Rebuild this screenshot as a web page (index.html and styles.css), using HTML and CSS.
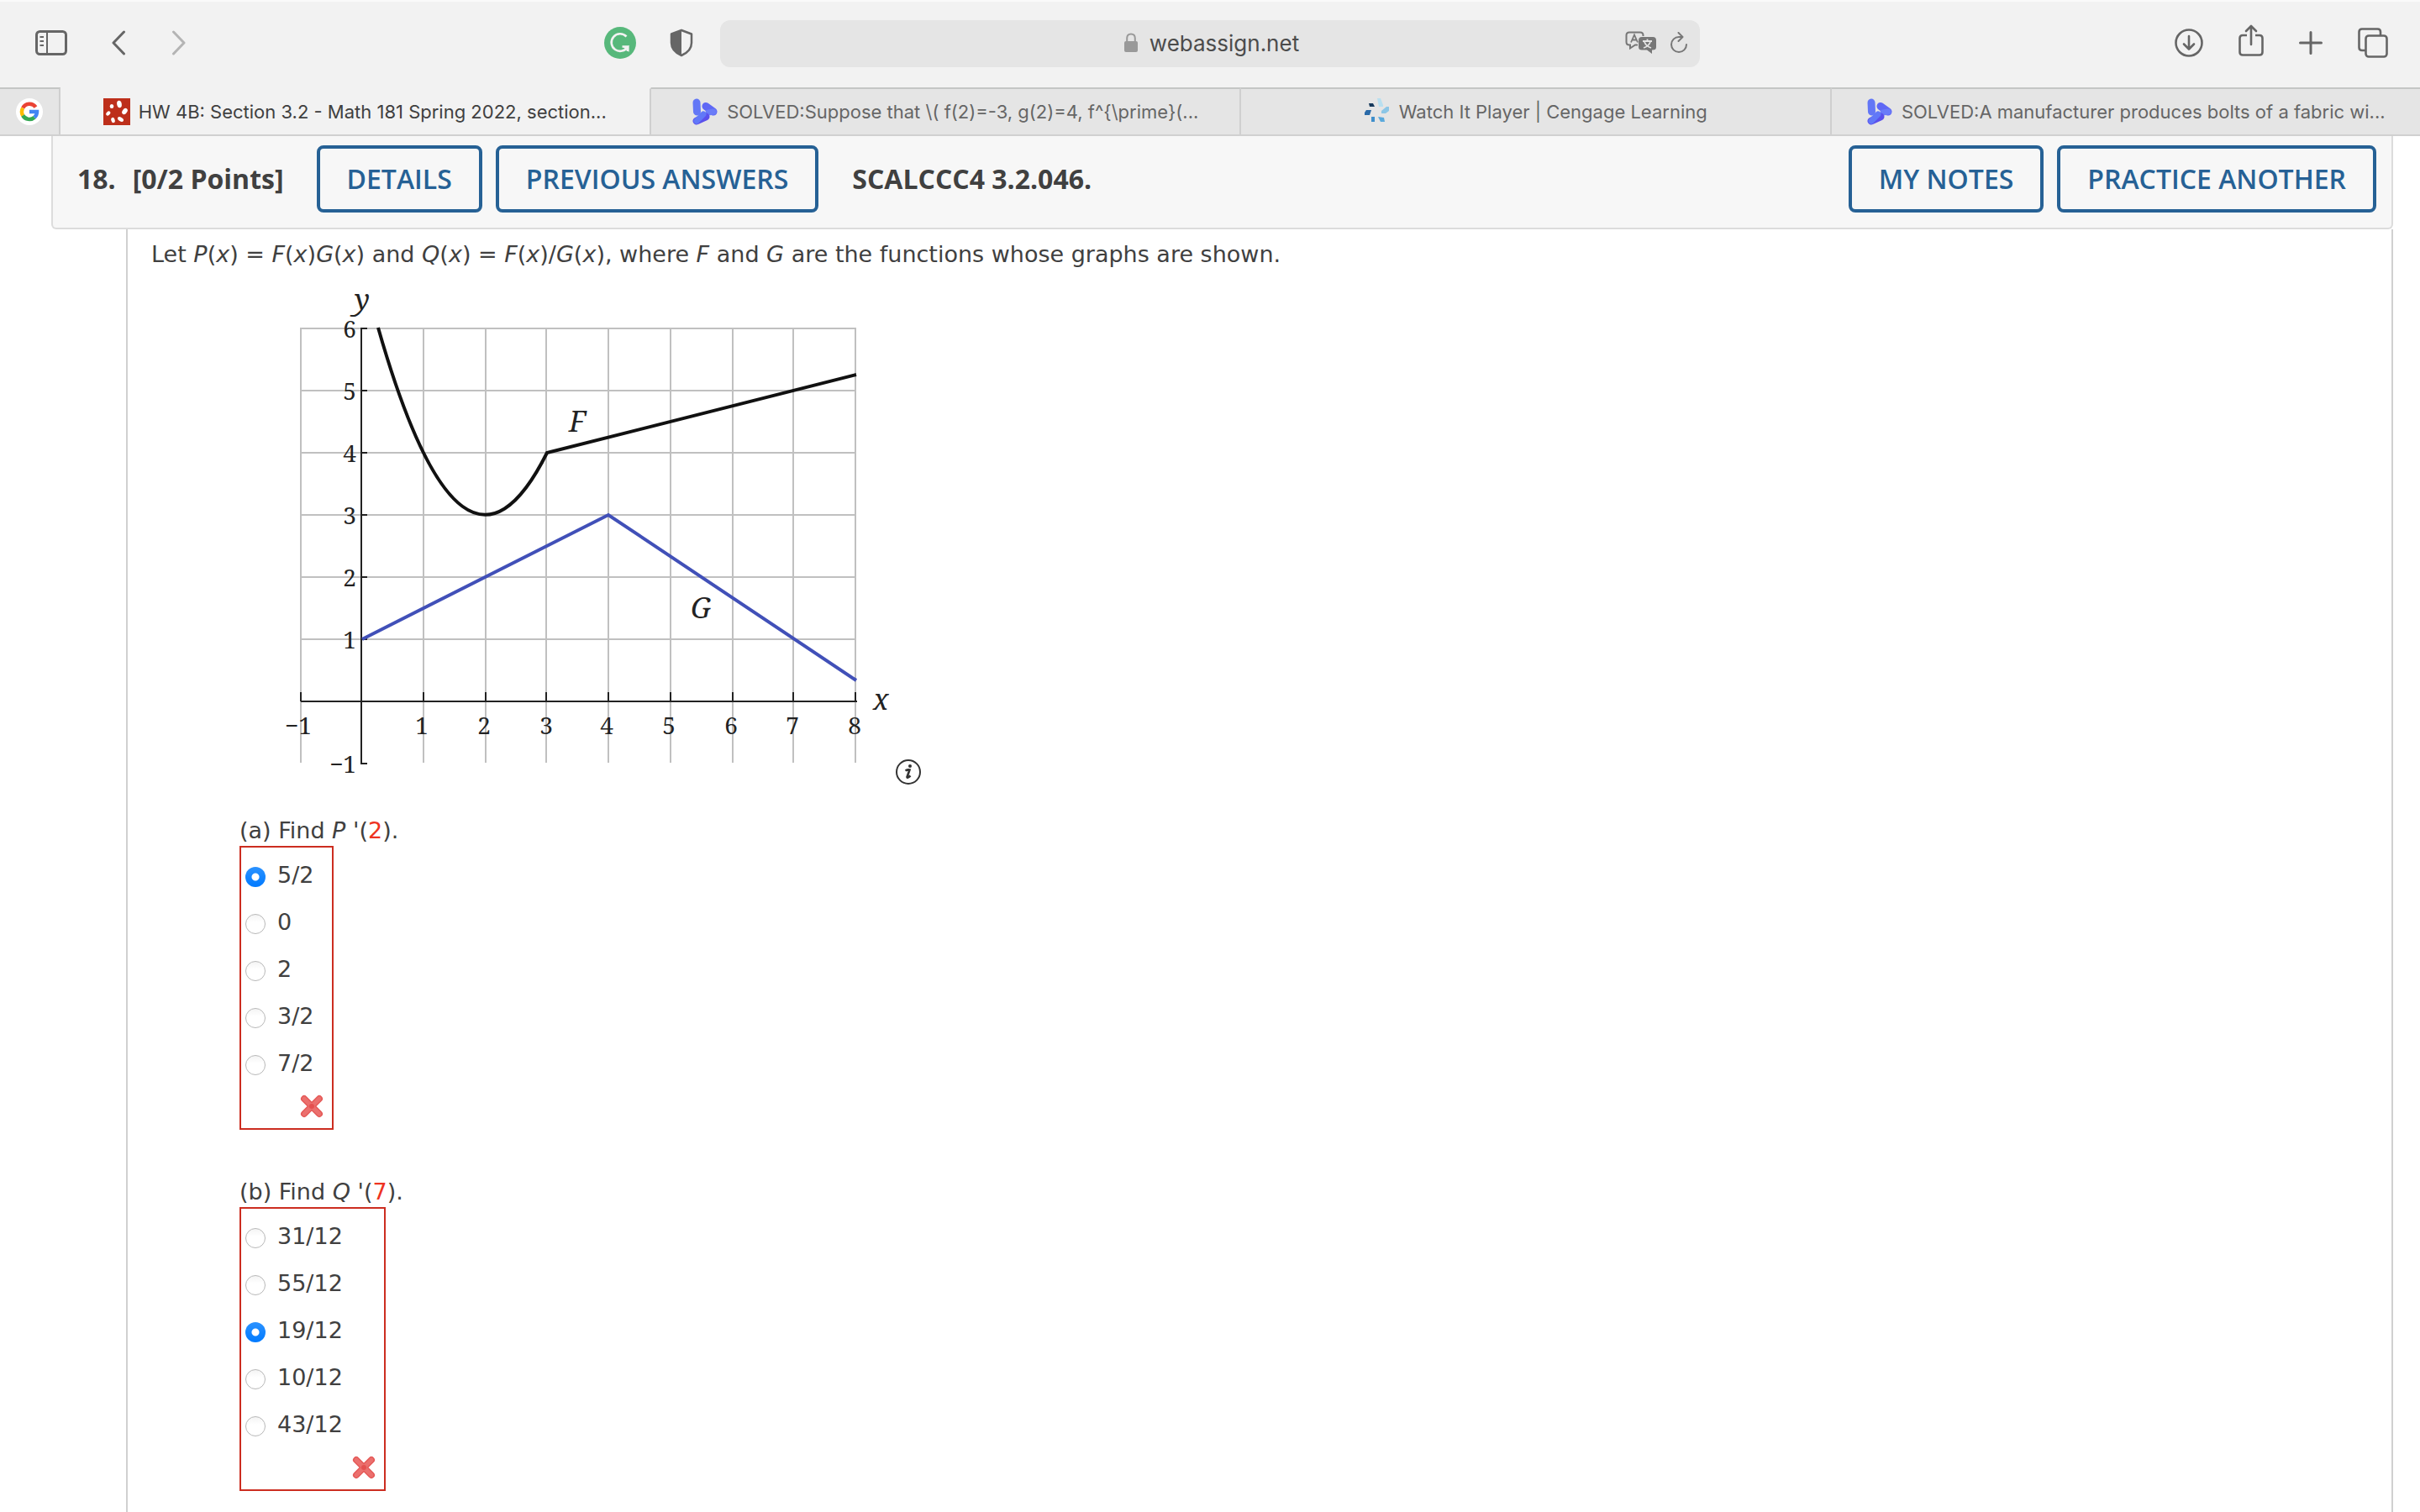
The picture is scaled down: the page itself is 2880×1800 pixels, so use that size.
FILE: index.html
```
<!DOCTYPE html>
<html lang="en">
<head>
<meta charset="utf-8">
<title>HW 4B: Section 3.2 - Math 181 Spring 2022</title>
<link rel="stylesheet" href="styles.css">
</head>
<body>
<svg class="defs" aria-hidden="true">
  <defs>
    <symbol id="cross" viewBox="0 0 28 28"><path d="M5 5 23 23M23 5 5 23" fill="none" stroke="#e55a58" stroke-width="8" stroke-linecap="round"/><path d="M5 5 23 23M23 5 5 23" fill="none" stroke="#eb706e" stroke-width="5" stroke-linecap="round"/><circle cx="14" cy="14" r="3" fill="#e4504f"/></symbol>
    <symbol id="numerade" viewBox="0 0 32 32"><g fill="none" stroke-linecap="round"><path d="M6 5 6.500 16" stroke="#6377f6" stroke-width="9"/><path d="M17 9.500 26 16" stroke="#5f68f5" stroke-width="9"/><path d="M26 16 20 17" stroke="#6a7cf8" stroke-width="7"/><path d="M17 22 6 27" stroke="#5a50ec" stroke-width="9"/><path d="M14 19 6 27" stroke="#6178f8" stroke-width="7"/></g></symbol>
  </defs>
</svg>
<header class="browser">
  <div class="toolbar">
    <div class="tools tools-left">
      <button class="icon-btn" aria-label="Sidebar"><svg width="40" height="32" viewBox="0 0 40 32"><rect x="2.500" y="2.500" width="35" height="27" rx="4" fill="none" stroke="#666" stroke-width="3"/><path d="M15 2V30" stroke="#666" stroke-width="2"/><path d="M6.500 9H11M6.500 14H11M6.500 19H11" stroke="#666" stroke-width="2"/></svg></button>
      <button class="icon-btn back" aria-label="Back"><svg width="18" height="30" viewBox="0 0 18 30"><path d="M15.500 2 3 15 15.500 28" fill="none" stroke="#666" stroke-width="3" stroke-linecap="round" stroke-linejoin="round"/></svg></button>
      <button class="icon-btn forward" aria-label="Forward"><svg width="18" height="30" viewBox="0 0 18 30"><path d="M2.500 2 15 15 2.500 28" fill="none" stroke="#b4b4b4" stroke-width="3" stroke-linecap="round" stroke-linejoin="round"/></svg></button>
      <div class="extensions">
        <button class="icon-btn" aria-label="Grammarly"><svg width="38" height="38" viewBox="0 0 38 38"><circle cx="19" cy="19" r="19" fill="#57b87b"/><path d="M26.500 11.500A10.300 10.300 0 1 0 28 23.500H21.500M28 23.500V29" fill="none" stroke="#f2f2f2" stroke-width="2.600"/><path d="M22 23.500H29.500V30Z" fill="#f2f2f2"/></svg></button>
        <button class="icon-btn" aria-label="Privacy report"><svg width="28" height="34" viewBox="0 0 28 34"><path d="M14 2 26 6.500V17C26 24 21 29 14 32 7 29 2 24 2 17V6.500Z" fill="none" stroke="#666" stroke-width="2.500" stroke-linejoin="round"/><path d="M14 2V32C7 29 2 24 2 17V6.500Z" fill="#666"/></svg></button>
      </div>
    </div>
    <div class="address">
      <svg width="16" height="24" viewBox="0 0 16 24"><path d="M3.200 11V6.500C3.200 3.500 5 1.500 8 1.500S12.800 3.500 12.800 6.500V11" fill="none" stroke="#999" stroke-width="2"/><rect y="10" width="16" height="13" rx="2" fill="#999"/></svg>
      <span>webassign.net</span>
      <div class="address-actions">
        <button class="icon-btn" aria-label="Translate"><svg width="37" height="28" viewBox="0 0 37 28"><path d="M15 16.500H12L6 20.500V16.500H5Q1.500 16.500 1.500 13V5Q1.500 1.500 5 1.500H18Q21.500 1.500 21.500 5V6" fill="none" stroke="#777" stroke-width="2"/><path d="M7 13.500 11 4.500 15 13.500M8.500 10.500H13.500" fill="none" stroke="#777" stroke-width="1.800"/><path d="M20 7H33Q37 7 37 11V19Q37 22.500 33 22.500H32V27L26 22.500H20Q16 22.500 16 19V11Q16 7 20 7Z" fill="#777"/><path d="M21 12H32M26.500 9.500V12M23 13Q25 18 31 20M30 13Q28 18 22 20" fill="none" stroke="#e5e5e5" stroke-width="1.800"/></svg></button>
        <button class="icon-btn" aria-label="Reload"><svg width="22" height="26" viewBox="0 0 22 26"><path d="M14.500 6H11A9 9 0 1 0 20 15M10.500 1 15.500 6 10.500 11" fill="none" stroke="#777" stroke-width="2" stroke-linecap="round" stroke-linejoin="round"/></svg></button>
      </div>
    </div>
    <div class="tools tools-right">
      <button class="icon-btn" aria-label="Downloads"><svg width="34" height="34" viewBox="0 0 34 34"><circle cx="17" cy="17" r="15.500" fill="none" stroke="#666" stroke-width="2.600"/><path d="M17 9V24M11 18.500 17 24.500 23 18.500" fill="none" stroke="#666" stroke-width="2.600" stroke-linecap="round" stroke-linejoin="round"/></svg></button>
      <button class="icon-btn" aria-label="Share"><svg class="share" width="30" height="38" viewBox="0 0 30 38"><path d="M10 13H5Q1.500 13 1.500 16.500V33Q1.500 36.500 5 36.500H25Q28.500 36.500 28.500 33V16.500Q28.500 13 25 13H20" fill="none" stroke="#666" stroke-width="2.600"/><path d="M15 24V3M9 8 15 2 21 8" fill="none" stroke="#666" stroke-width="2.600" stroke-linecap="round" stroke-linejoin="round"/></svg></button>
      <button class="icon-btn" aria-label="New tab"><svg width="28" height="28" viewBox="0 0 28 28"><path d="M14 1.500V26.500M1.500 14H26.500" stroke="#666" stroke-width="3" stroke-linecap="round"/></svg></button>
      <button class="icon-btn" aria-label="Show tabs"><svg width="36" height="36" viewBox="0 0 36 36"><path d="M9 27H5Q1.500 27 1.500 23.500V5Q1.500 1.500 5 1.500H23.500Q27 1.500 27 5V9" fill="none" stroke="#666" stroke-width="2.600"/><rect x="9.500" y="9.500" width="25" height="25" rx="3.500" fill="none" stroke="#666" stroke-width="2.600"/></svg></button>
    </div>
  </div>
  <nav class="tabs">
    <a class="tab pinned" href="#" aria-label="Google"><svg width="32" height="32" viewBox="0 0 32 32"><circle cx="16" cy="16" r="16" fill="#fff"/><g fill="none" stroke-width="4.500"><path d="M23.500 10.500A9 9 0 0 0 8.200 11.500" stroke="#ea4335"/><path d="M8.200 11.500A9 9 0 0 0 8.200 20.500" stroke="#fbbc05"/><path d="M8.200 20.500A9 9 0 0 0 22 22.700" stroke="#34a853"/><path d="M22 22.700A9 9 0 0 0 25 16H16" stroke="#4285f4"/></g></svg></a>
    <a class="tab active" href="#"><svg width="32" height="32" viewBox="0 0 32 32"><rect width="32" height="32" fill="#bd2f1b"/><g fill="#fff"><ellipse cx="19" cy="7" rx="2.800" ry="4.200" transform="rotate(-10 19 7)"/><ellipse cx="10" cy="9.500" rx="2.300" ry="2.500"/><ellipse cx="25.500" cy="15.500" rx="2.800" ry="4" transform="rotate(35 25.500 15.500)"/><ellipse cx="5.800" cy="18" rx="2" ry="3" transform="rotate(45 5.800 18)"/><ellipse cx="11.500" cy="26" rx="2.200" ry="3.200" transform="rotate(-15 11.500 26)"/><ellipse cx="20.500" cy="25" rx="2.300" ry="3.800" transform="rotate(-60 20.500 25)"/></g></svg><span>HW 4B: Section 3.2 - Math 181 Spring 2022, section...</span></a>
    <a class="tab" href="#"><svg width="32" height="32"><use href="#numerade"/></svg><span>SOLVED:Suppose that \( f(2)=-3, g(2)=4, f^{\prime}(...</span></a>
    <a class="tab" href="#"><svg width="32" height="32" viewBox="0 0 32 32"><path d="M16 0H20L23 8V10H18Z" fill="#b9dff0"/><path d="M6 6H11L13 10H7Z" fill="#16395c"/><path d="M27 10H30V15L26 18H21V15Z" fill="#8cc6e6"/><path d="M3 14H9L7 20H1V17Z" fill="#2a6aa8"/><path d="M9 22H13V28H9Z" fill="#3f8fcb"/><path d="M17 22 24 23 25 28H20Z" fill="#5aa9dc"/></svg><span>Watch It Player | Cengage Learning</span></a>
    <a class="tab" href="#"><svg width="32" height="32"><use href="#numerade"/></svg><span>SOLVED:A manufacturer produces bolts of a fabric wi...</span></a>
  </nav>
</header>
<main class="question">
  <div class="question-head">
    <span class="number">18.</span>
    <span class="points">[0/2 Points]</span>
    <button class="btn">DETAILS</button>
    <button class="btn">PREVIOUS ANSWERS</button>
    <span class="source">SCALCCC4 3.2.046.</span>
    <button class="btn notes">MY NOTES</button>
    <button class="btn">PRACTICE ANOTHER</button>
  </div>
  <div class="question-body">
    <p class="prompt">Let <i>P</i>(<i>x</i>) = <i>F</i>(<i>x</i>)<i>G</i>(<i>x</i>) and <i>Q</i>(<i>x</i>) = <i>F</i>(<i>x</i>)/<i>G</i>(<i>x</i>), where <i>F</i> and <i>G</i> are the functions whose graphs are shown.</p>
    <div class="figure">
      <svg class="graph" width="732" height="606" viewBox="0 -12 732 606" role="img" aria-label="Graphs of F and G">
        <path class="grid" d="M25 49V567M171 49V567M245 49V567M317 49V567M391 49V567M465 49V567M539 49V567M611 49V567M685 49V567M25 50H686M25 124H686M25 198H686M25 272H686M25 346H686M25 420H686"/>
        <path class="axis" d="M25 494H687M97 49V569M25 494V483M171 494V483M245 494V483M317 494V483M391 494V483M465 494V483M539 494V483M611 494V483M685 494V483M97 50H104M97 124H104M97 198H104M97 272H104M97 346H104M97 420H104M97 568H104"/>
        <path class="curve-f" d="M117 49Q217 400 318 198L686 105"/>
        <path class="curve-g" d="M98 420 391 272 686 469"/>
        <g class="ticks" text-anchor="middle">
          <text x="22" y="533">−1</text><text x="169" y="533">1</text><text x="243" y="533">2</text><text x="317" y="533">3</text><text x="389" y="533">4</text><text x="463" y="533">5</text><text x="537" y="533">6</text><text x="610" y="533">7</text><text x="684" y="533">8</text>
        </g>
        <g class="ticks" text-anchor="end">
          <text x="91" y="61">6</text><text x="91" y="135">5</text><text x="91" y="209">4</text><text x="91" y="283">3</text><text x="91" y="357">2</text><text x="91" y="431">1</text><text x="91" y="579">−1</text>
        </g>
        <g class="names"><text x="89" y="28">y</text><text x="344" y="173">F</text><text x="489" y="395">G</text><text x="706" y="504">x</text></g>
      </svg>
      <button class="icon-btn" aria-label="Image description"><svg width="32" height="32" viewBox="0 0 32 32"><circle cx="16" cy="16" r="14" fill="#fff" stroke="#333" stroke-width="2"/><circle cx="18" cy="9" r="2" fill="#333"/><path d="M12.500 14.500Q15 13 17.500 13.500L14.500 22Q14.500 24 18.500 20.500" fill="none" stroke="#333" stroke-width="2.600"/></svg></button>
    </div>
    <section class="part">
      <p>(a) Find <i>P</i> <i>'</i>(<span class="value">2</span>).</p>
      <fieldset class="answers">
        <label><input type="radio" name="a" checked>5/2</label>
        <label><input type="radio" name="a">0</label>
        <label><input type="radio" name="a">2</label>
        <label><input type="radio" name="a">3/2</label>
        <label><input type="radio" name="a">7/2</label>
        <svg class="mark" width="28" height="28" role="img" aria-label="Incorrect"><use href="#cross"/></svg>
      </fieldset>
    </section>
    <section class="part">
      <p>(b) Find <i>Q</i> <i>'</i>(<span class="value">7</span>).</p>
      <fieldset class="answers wide">
        <label><input type="radio" name="b">31/12</label>
        <label><input type="radio" name="b">55/12</label>
        <label><input type="radio" name="b" checked>19/12</label>
        <label><input type="radio" name="b">10/12</label>
        <label><input type="radio" name="b">43/12</label>
        <svg class="mark" width="28" height="28" role="img" aria-label="Incorrect"><use href="#cross"/></svg>
      </fieldset>
    </section>
  </div>
</main>
</body>
</html>
```
FILE: styles.css
```
* { box-sizing: border-box; }
html, body { height: 100%; }
body {
  margin: 0;
  display: flex;
  flex-direction: column;
  background: #fff;
  color: #404040;
  font-family: "DejaVu Sans", Verdana, sans-serif;
  font-size: 27px;
  overflow: hidden;
}
.defs { position: absolute; width: 0; height: 0; }
p { margin: 0; }
svg { display: block; flex: none; }
.icon-btn { display: block; padding: 0; border: 0; background: none; }

.browser { flex: none; background: #f2f2f2; font-family: Inter, sans-serif; }
.toolbar {
  display: grid;
  grid-template-columns: 1fr 1166px 1fr;
  align-items: center;
  height: 104px;
  padding-bottom: 2px;
  border-top: 2px solid #fafafa;
}
.tools { display: flex; align-items: center; padding-bottom: 2px; }
.tools-left { padding-left: 41px; padding-right: 32px; }
.back { margin-left: 51px; }
.forward { margin-left: 54px; }
.extensions { display: flex; align-items: center; gap: 40px; margin-left: auto; }
.tools-right { justify-content: flex-end; gap: 42px; padding-right: 38px; }
.share { margin-bottom: 6px; }
.address {
  position: relative;
  display: flex;
  align-items: center;
  justify-content: center;
  gap: 14px;
  height: 56px;
  padding: 0 0 2px 4px;
  border-radius: 12px;
  background: #e5e5e5;
  color: #4c4c4c;
  font-size: 26px;
}
.address-actions { position: absolute; right: 14px; display: flex; align-items: center; gap: 16px; }

.tabs { display: flex; height: 58px; border-bottom: 2px solid #d0d0d0; }
.tab {
  flex: 1;
  display: flex;
  align-items: center;
  justify-content: center;
  gap: 10px;
  min-width: 0;
  border-top: 2px solid #c4c6c5;
  border-right: 2px solid #cfcfcf;
  background: #e5e5e5;
  color: #666;
  font-size: 22px;
  text-decoration: none;
  white-space: nowrap;
}
.tab:last-child { border-right: 0; }
.pinned { flex: 0 0 72px; }
.active { background: #f2f2f2; border-top-color: #f2f2f2; color: #404040; }

.question { flex: 1; display: flex; flex-direction: column; min-height: 0; padding: 0 32px 0 61px; }
.question-head {
  flex: none;
  display: flex;
  align-items: center;
  padding: 11px 18px 18px 29px;
  border: 2px solid #dcdcdc;
  border-top: 0;
  border-radius: 0 0 6px 6px;
  background: #f7f7f7;
  font-family: "Open Sans", sans-serif;
  font-size: 32px;
  font-weight: 700;
}
.question-head span { padding-bottom: 2px; }
.points { margin: 0 39px 0 20px; }
.source { margin-left: 24px; }
.btn {
  height: 80px;
  margin-right: 16px;
  padding: 0 32px 2px;
  border: 4px solid #266195;
  border-radius: 8px;
  background: #fff0;
  color: #266195;
  font: 600 32px "Open Sans", sans-serif;
}
.btn:last-child { margin-right: 0; }
.notes { margin-left: auto; }
.question-body {
  flex: 1;
  min-height: 0;
  margin-left: 89px;
  padding: 14px 28px;
  border: 2px solid #d0d0d0;
  border-width: 0 2px;
}
.prompt { line-height: 32px; }
.figure { display: flex; align-items: flex-end; padding: 10px 0 0 153px; }
.part { padding: 38px 0 20px 105px; line-height: 32px; }
.value { color: #ee3322; }
.answers {
  display: flex;
  flex-direction: column;
  width: 112px;
  margin: 2px 0 0;
  padding: 5px 10px 12px 5px;
  border: 2px solid #cc2d20;
}
.wide { width: 174px; }
.answers label { display: flex; align-items: center; gap: 14px; height: 56px; }
.answers input {
  appearance: none;
  flex: none;
  width: 24px;
  height: 24px;
  margin: 4px 0 0;
  border: 1px solid #b8b8b8;
  border-radius: 50%;
  background: linear-gradient(#f4f4f4, #fff 40%);
}
.answers input:checked { border: 0; background: radial-gradient(circle, #fff 4px, #0000 5px), linear-gradient(#2b92ff, #007aff); }
.mark { align-self: flex-end; margin-top: 9px; }

.grid, .axis, .curve-f, .curve-g { fill: none; }
.grid { stroke: #8888; stroke-width: 2; }
.axis { stroke: #222; stroke-width: 2; }
.curve-f { stroke: #111; stroke-width: 4; }
.curve-g { stroke: #4150b8; stroke-width: 4; }
.ticks, .names { fill: #222; font-family: "Noto Serif", "Liberation Serif", serif; font-size: 28px; }
.names { font-size: 34px; font-style: italic; }
```
